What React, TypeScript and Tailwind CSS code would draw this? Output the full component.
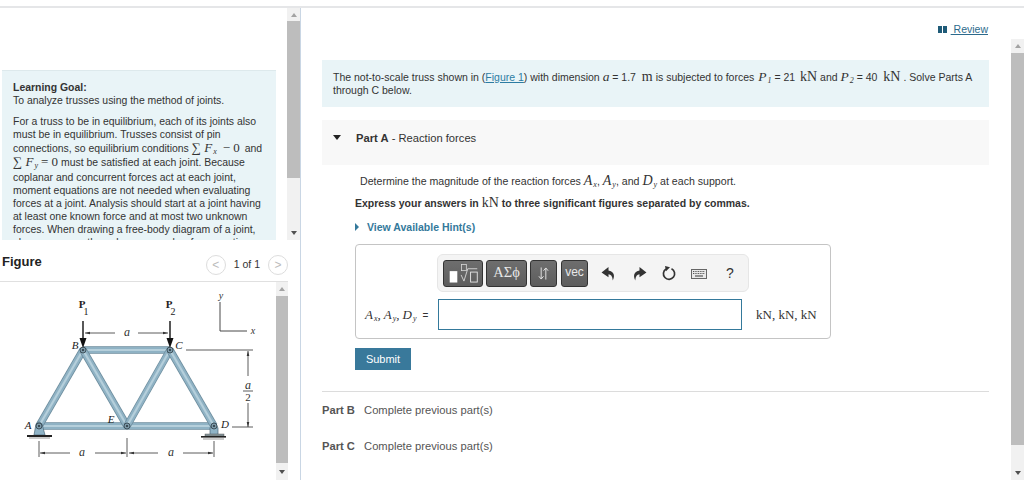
import React from "react";

const M = ({ children, className = "" }: { children: React.ReactNode; className?: string }) => (
  <span className={`font-['Liberation_Serif',serif] italic text-[13.5px] ${className}`}>{children}</span>
);
const R = ({ children, className = "text-[14px]" }: { children: React.ReactNode; className?: string }) => (
  <span className={`font-['Liberation_Serif',serif] ${className}`}>{children}</span>
);
const Sub = ({ children }: { children: React.ReactNode }) => (
  <sub className="text-[8px] leading-none ml-[1px]">{children}</sub>
);

function ScrollBar({ w, topGap, thumb, bottomGap }: { w: string; topGap: string; thumb: string; bottomGap: string }) {
  return (
    <div className={`${w} shrink-0 bg-[#f1f1f1] flex flex-col items-center`}>
      <div className={`${topGap} w-full flex items-center justify-center shrink-0`}>
        <div className="w-0 h-0 border-x-[3.5px] border-x-transparent border-b-[4px] border-b-[#a3a3a3]" />
      </div>
      <div className={`${thumb} w-full bg-[#bdbdbd] shrink-0`} />
      <div className="flex-1" />
      <div className={`${bottomGap} w-full flex items-center justify-center shrink-0`}>
        <div className="w-0 h-0 border-x-[3.5px] border-x-transparent border-t-[4px] border-t-[#505050]" />
      </div>
    </div>
  );
}

function Bar({ x1, y1, x2, y2 }: { x1: number; y1: number; x2: number; y2: number }) {
  return (
    <g>
      <line x1={x1} y1={y1} x2={x2} y2={y2} stroke="#6b8b9c" strokeWidth="7.6" />
      <line x1={x1} y1={y1} x2={x2} y2={y2} stroke="#8fb2c4" strokeWidth="6.2" />
      <line x1={x1} y1={y1} x2={x2} y2={y2} stroke="#b5cfdb" strokeWidth="2.2" />
    </g>
  );
}

function Pin({ x, y }: { x: number; y: number }) {
  return (
    <g>
      <circle cx={x} cy={y} r="3" fill="#7c99a8" stroke="#2f3e46" strokeWidth="0.8" />
      <circle cx={x} cy={y} r="1" fill="#26323a" />
    </g>
  );
}

function Truss() {
  const t = "font-['Liberation_Serif',serif] italic";
  const s = "font-['Liberation_Serif',serif]";
  const ln = { stroke: "#333", strokeWidth: 0.8, fill: "none" };
  return (
    <svg viewBox="0 282 276 198" className="w-[276px] h-[198px] shrink-0">
      <Bar x1={39} y1={426} x2={214} y2={426} />
      <Bar x1={83} y1={350} x2={170} y2={350} />
      <Bar x1={39} y1={426} x2={83} y2={350} />
      <Bar x1={83} y1={350} x2={127} y2={426} />
      <Bar x1={127} y1={426} x2={170} y2={350} />
      <Bar x1={170} y1={350} x2={214} y2={426} />
      <path d="M34 435 L36 424 Q39 420 42 424 L45 435 Z" fill="#8fb3c6" stroke="#4b6675" strokeWidth="0.7" />
      <rect x="27" y="435" width="25" height="2" fill="#222" />
      <rect x="29" y="437" width="21" height="2" fill="#ccc" />
      <path d="M210 428 Q214 418 218 428 L218 435 L210 435 Z" fill="#8fb3c6" stroke="#4b6675" strokeWidth="0.7" />
      <rect x="205" y="434" width="19" height="2" fill="#8a9a9f" stroke="#444" strokeWidth="0.4" />
      <rect x="201" y="436" width="25" height="1.6" fill="#222" />
      <rect x="203" y="438" width="21" height="2" fill="#ccc" />
      <Pin x={39} y={426} />
      <Pin x={127} y={426} />
      <Pin x={214} y={426} />
      <Pin x={83} y={350} />
      <Pin x={170} y={350} />
      <line x1="83" y1="321" x2="83" y2="340" stroke="#111" strokeWidth="1.4" />
      <path d="M79.5 338 L86.5 338 L83 348 Z" fill="#111" />
      <line x1="170" y1="321" x2="170" y2="340" stroke="#111" strokeWidth="1.4" />
      <path d="M166.5 338 L173.5 338 L170 348 Z" fill="#111" />
      <path d="M85 333 H115 M138 333 H168" {...ln} />
      <path d="M85 333 l5 -1.3 v2.6 Z M168 333 l-5 -1.3 v2.6 Z" fill="#333" />
      <text x="82" y="308" fontSize="11" fontWeight="700" textAnchor="middle" className={s} fill="#222">P</text>
      <text x="86" y="315" fontSize="10" textAnchor="middle" className={s} fill="#222">1</text>
      <text x="169" y="308" fontSize="11" fontWeight="700" textAnchor="middle" className={s} fill="#222">P</text>
      <text x="173" y="315" fontSize="10" textAnchor="middle" className={s} fill="#222">2</text>
      <text x="127" y="336" fontSize="12" textAnchor="middle" className={t} fill="#333">a</text>
      <text x="75" y="349" fontSize="11" textAnchor="middle" className={t} fill="#222">B</text>
      <text x="179" y="349" fontSize="11" textAnchor="middle" className={t} fill="#222">C</text>
      <text x="28" y="429" fontSize="11" textAnchor="middle" className={t} fill="#222">A</text>
      <text x="111" y="423" fontSize="11" textAnchor="middle" className={t} fill="#222">E</text>
      <text x="225" y="428" fontSize="11" textAnchor="middle" className={t} fill="#222">D</text>
      <path d="M220 302 V331 H247" {...ln} strokeWidth={0.9} />
      <text x="221" y="299" fontSize="10" textAnchor="middle" className={t} fill="#333">y</text>
      <text x="253" y="334" fontSize="10" textAnchor="middle" className={t} fill="#333">x</text>
      <path d="M186 350 H253 M232 427 H253" {...ln} />
      <path d="M248 351 V376 M248 403 V427" {...ln} />
      <path d="M248 351 l-1.3 5 h2.6 Z M248 427 l-1.3 -5 h2.6 Z" fill="#333" />
      <text x="248" y="389" fontSize="12" textAnchor="middle" className={t} fill="#333">a</text>
      <line x1="243" y1="391" x2="253" y2="391" stroke="#333" strokeWidth="0.8" />
      <text x="248" y="401" fontSize="11" textAnchor="middle" className={s} fill="#333">2</text>
      <path d="M39 441 V457 M127 438 V457 M214 441 V457" {...ln} />
      <path d="M40 453 H70 M95 453 H126 M129 453 H158 M183 453 H213" {...ln} />
      <path d="M40 453 l5 -1.3 v2.6 Z M126 453 l-5 -1.3 v2.6 Z M129 453 l5 -1.3 v2.6 Z M213 453 l-5 -1.3 v2.6 Z" fill="#333" />
      <text x="82" y="456" fontSize="12" textAnchor="middle" className={t} fill="#333">a</text>
      <text x="171" y="456" fontSize="12" textAnchor="middle" className={t} fill="#333">a</text>
    </svg>
  );
}

function TbBtn({ w, children }: { w: string; children: React.ReactNode }) {
  return (
    <div className={`${w} h-[27px] rounded-[3px] border border-[#333] bg-gradient-to-b from-[#6e6e6e] to-[#5d5d5d] text-[#e8e8e8] flex items-center justify-center shrink-0`}>
      {children}
    </div>
  );
}

function Toolbar() {
  return (
    <div className="w-[312px] h-[38px] ml-[81px] mt-[9px] bg-[#f4f4f4] border border-[#e6e6e6] rounded-[6px] flex items-center pl-[5px]">
      <div className="flex gap-[3px]">
        <TbBtn w="w-[40px]">
          <svg viewBox="0 0 40 27" className="w-[40px] h-[27px]">
            <rect x="6" y="11" width="8" height="12" fill="#fff" />
            <rect x="18.5" y="4" width="5" height="6.5" fill="none" stroke="#ddd" strokeWidth="0.8" />
            <path d="M18 15 L21 21.5 L25 8.5 H35" fill="none" stroke="#ddd" strokeWidth="0.9" />
            <rect x="28" y="12" width="7" height="10.5" fill="none" stroke="#eee" strokeWidth="0.9" />
          </svg>
        </TbBtn>
        <TbBtn w="w-[41px]"><span className="font-['Liberation_Serif',serif] text-[14.5px]">ΑΣϕ</span></TbBtn>
        <TbBtn w="w-[27px]">
          <svg viewBox="0 0 27 27" className="w-[27px] h-[27px]">
            <path d="M11 7 V19 M8.5 16.5 L11 19.5 L13.5 16.5 M16 20 V8 M13.5 10.5 L16 7.5 L18.5 10.5" fill="none" stroke="#e8e8e8" strokeWidth="1" />
          </svg>
        </TbBtn>
        <TbBtn w="w-[27px] ml-[1px]"><span className="font-['Liberation_Sans',sans-serif] text-[12px] -mt-[2px]">vec</span></TbBtn>
      </div>
      <svg viewBox="0 0 14 14" className="w-[15px] h-[15px] ml-[13px] shrink-0">
        <path d="M7 1 L0.5 6 L7 10.5 V7.8 Q10.5 7.8 11 13.5 Q14.5 6 7 4.2 Z" fill="#333" />
      </svg>
      <svg viewBox="0 0 14 14" className="w-[15px] h-[15px] ml-[16px] shrink-0">
        <path d="M7 1 L13.5 6 L7 10.5 V7.8 Q3.5 7.8 3 13.5 Q-0.5 6 7 4.2 Z" fill="#333" />
      </svg>
      <svg viewBox="0 0 14 16" className="w-[14px] h-[16px] ml-[15px] shrink-0">
        <path d="M9.5 3.7 A5.6 5.6 0 1 1 4 4" fill="none" stroke="#333" strokeWidth="1.7" />
        <path d="M3 1 L8 2.2 L4 6.2 Z" fill="#333" />
      </svg>
      <svg viewBox="0 0 16 10" className="w-[16px] h-[10px] ml-[15px] mt-[2px] shrink-0">
        <rect x="0.5" y="0.5" width="15" height="9" fill="#e8e8e8" stroke="#666" />
        <path d="M2 2.5 H14 M2 4.5 H14" stroke="#555" strokeWidth="1" strokeDasharray="1 0.7" />
        <path d="M4 7 H12" stroke="#555" strokeWidth="1.2" />
      </svg>
      <span className="ml-[19px] text-[14px] text-[#333] font-['Liberation_Sans',sans-serif]">?</span>
    </div>
  );
}

export default function App() {
  return (
    <div className="w-[1024px] h-[480px] overflow-hidden bg-white font-['Liberation_Sans',Arial,sans-serif] text-[#333]">
      <div className="h-[6px]" />
      <div className="h-[2px] bg-[#e5e6e8]" />
      <div className="flex h-[472px]">
        <div className="w-[301px] shrink-0 border-r border-[#c9d6e4] flex flex-col">
          <div className="flex h-[232px] shrink-0">
            <div className="flex-1 pl-[2px] pr-[11px] pt-[62px] min-w-0">
              <div className="h-[170px] overflow-hidden bg-[#e9f4f7] border-t border-[#dde9ec] pl-[11px] pr-[10px] pt-[10px] text-[10.45px] leading-[13px] text-[#333]">
                <div className="font-bold">Learning Goal:</div>
                <div>To analyze trusses using the method of joints.</div>
                <div className="mt-[8px]">
                  For a truss to be in equilibrium, each of its joints also must be in equilibrium. Trusses consist of pin connections, so equilibrium conditions <M className="text-[13px]">∑ F<Sub>x</Sub></M> <span className="ml-[3px]"><R className="text-[13px]">− 0</R></span> <span className="ml-[2px]">and</span> <M className="text-[13px]">∑ F<Sub>y</Sub></M> <R className="text-[13px]">= 0</R> must be satisfied at each joint. Because
                </div>
                <div className="mt-[2px]">
                  coplanar and concurrent forces act at each joint, moment equations are not needed when evaluating forces at a joint. Analysis should start at a joint having at least one known force and at most two unknown forces. When drawing a free-body diagram of a joint, always assume the unknown member forces acting
                </div>
              </div>
            </div>
            <ScrollBar w="w-[13px]" topGap="h-[13px]" thumb="h-[157px]" bottomGap="h-[14px]" />
          </div>
          <div className="h-[42px] shrink-0 flex items-center border-b border-[#e0e0e0] mr-[12px] pl-[2px]">
            <span className="font-bold text-[13px] text-[#222] mt-[3px]">Figure</span>
            <div className="flex-1" />
            <div className="flex items-center mt-[9px]">
              <div className="w-[20px] h-[20px] rounded-full border border-[#ddd] flex items-center justify-center text-[#bbb] text-[12px]">&lt;</div>
              <span className="text-[10.5px] mx-[8px]">1 of 1</span>
              <div className="w-[20px] h-[20px] rounded-full border border-[#ddd] flex items-center justify-center text-[#bbb] text-[12px]">&gt;</div>
            </div>
          </div>
          <div className="flex flex-1 min-h-0">
            <Truss />
            <ScrollBar w="w-[12px]" topGap="h-[14px]" thumb="h-[167px]" bottomGap="h-[17px]" />
          </div>
        </div>
        <div className="flex-1 min-w-0 flex flex-col">
          <div className="h-[31px] shrink-0 pt-[15px] pr-[36px] flex justify-end items-start text-[10.5px] leading-[13px] text-[#2c6a8c]">
            <svg viewBox="0 0 9 7" className="w-[9px] h-[7px] mt-[3px] shrink-0">
              <path d="M0 0 H4 V7 H0 Z M5 0 H9 V7 H5 Z" fill="#1f5b78" />
            </svg>
            <span className="underline whitespace-pre ml-[4px]"> Review</span>
          </div>
          <div className="flex flex-1 min-h-0">
            <div className="w-[689px] shrink-0 pl-[21px] pt-[21px]">
              <div className="w-[667px] h-[47px] bg-[#e9f4f7] pl-[11px] pr-[12px] pt-[10px] text-[10.5px] leading-[13px]">
                The not-to-scale truss shown in (<span className="underline text-[#2c7ca3]">Figure 1</span>) with dimension <M>a</M> = 1.7 <span className="ml-[3px]"><R>m</R></span> is subjected to forces <span className="ml-[1px]"><M>P<Sub>1</Sub></M></span> = 21 <span className="ml-[2px]"><R>kN</R></span> and <M>P<Sub>2</Sub></M> = 40 <span className="ml-[3px]"><R>kN</R></span> . Solve Parts A through C below.
              </div>
              <div className="w-[667px] h-[45px] mt-[13px] bg-[#f8f8f8] pl-[11px] pt-[11px] flex items-start text-[11.2px] leading-[14px]">
                <div className="w-0 h-0 mt-[4px] border-x-[4.5px] border-x-transparent border-t-[5px] border-t-[#222]" />
                <div className="ml-[15px]"><span className="font-bold">Part A</span> - Reaction forces</div>
              </div>
              <div className="pl-[38px] mt-[9px] text-[10.6px] leading-[14px]">
                Determine the magnitude of the reaction forces <M className="text-[14px]">A<Sub>x</Sub></M>, <M className="text-[14px]">A<Sub>y</Sub></M>, and <M className="text-[14px]">D<Sub>y</Sub></M> at each support.
              </div>
              <div className="pl-[33px] mt-[8px] text-[10.5px] leading-[14px] font-bold">
                Express your answers in <span className="font-normal"><R>kN</R></span> to three significant figures separated by commas.
              </div>
              <div className="pl-[33px] mt-[10px] text-[10.5px] leading-[14px] font-bold text-[#34799b] flex items-center">
                <div className="w-0 h-0 border-y-[4px] border-y-transparent border-l-[4px] border-l-[#34799b] mr-[8px]" />
                View Available Hint(s)
              </div>
              <div className="w-[476px] h-[95px] ml-[33px] mt-[10px] border border-[#c4c4c4] rounded-[4px]">
                <Toolbar />
                <div className="flex items-center mt-[7px] h-[31px]">
                  <div className="w-[82px] pl-[9px] text-[10px] whitespace-nowrap"><M className="text-[13px]">A<Sub>x</Sub>,<span className="ml-[3px]">A</span><Sub>y</Sub>,<span className="ml-[3px]">D</span><Sub>y</Sub></M><span className="ml-[6px]">=</span></div>
                  <div className="w-[304px] h-[31px] border border-[#34799b] shrink-0 bg-white" />
                  <div className="ml-[14px] font-['Liberation_Serif',serif] text-[13px] whitespace-nowrap">kN, kN, kN</div>
                </div>
              </div>
              <div className="w-[56px] h-[22px] ml-[33px] mt-[9px] bg-[#39799b] text-white text-[11px] flex items-center justify-center">Submit</div>
              <div className="w-[667px] h-px bg-[#dcdcdc] mt-[21px]" />
              <div className="mt-[11px] text-[11.2px] leading-[14px] text-[#555]"><span className="font-bold mr-[6px]">Part B</span> Complete previous part(s)</div>
              <div className="mt-[22px] text-[11.2px] leading-[14px] text-[#555]"><span className="font-bold mr-[6px]">Part C</span> Complete previous part(s)</div>
            </div>
            <div className="flex-1" />
            <ScrollBar w="w-[13px]" topGap="h-[14px]" thumb="h-[392px]" bottomGap="h-[14px]" />
          </div>
        </div>
      </div>
    </div>
  );
}
